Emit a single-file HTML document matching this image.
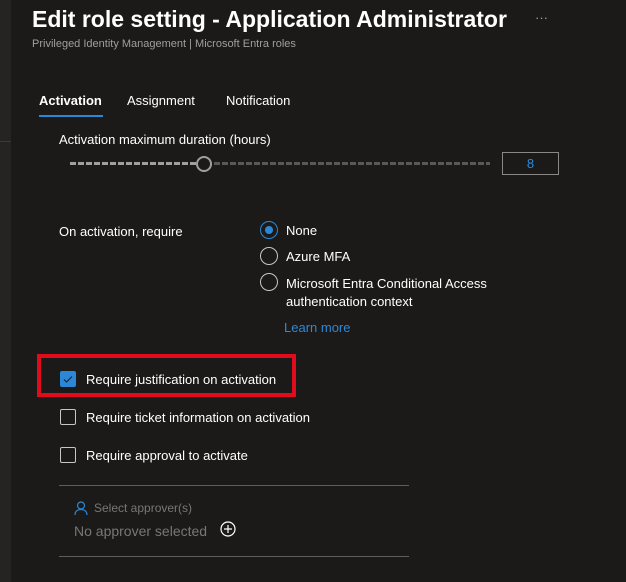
<!DOCTYPE html>
<html><head><style>
body{margin:0;width:626px;height:582px;background:#1b1a19;font-family:"Liberation Sans",sans-serif;color:#fff;position:relative;overflow:hidden}
.a{position:absolute;white-space:nowrap}
.strip{position:absolute;left:0;top:0;width:11px;height:582px;background:#252423}
.cb{position:absolute;width:16px;height:16px;border:1px solid #c8c6c4;border-radius:2px;box-sizing:border-box}
.rd{position:absolute;width:18px;height:18px;border:1.5px solid #c8c6c4;border-radius:50%;box-sizing:border-box}
.t{font-size:13px}
</style></head><body>
<div class="strip"></div>
<div style="position:absolute;left:0;top:141px;width:11px;height:1px;background:#3b3a39"></div>
<div class="a" style="left:32px;top:6px;font-size:23px;font-weight:bold">Edit role setting - Application Administrator</div>
<div class="a" style="left:535px;top:10px;font-size:13px;color:#a19f9d">···</div>
<div class="a" style="left:32px;top:38px;font-size:11px;color:#a19f9d">Privileged Identity Management | Microsoft Entra roles</div>
<div class="a" style="left:39px;top:93px;font-size:13px;font-weight:bold">Activation</div>
<div style="position:absolute;left:39px;top:115px;width:64px;height:2px;background:#2b88d8"></div>
<div class="a" style="left:127px;top:93px;font-size:13px">Assignment</div>
<div class="a" style="left:226px;top:93px;font-size:13px">Notification</div>
<div class="a t" style="left:59px;top:132px">Activation maximum duration (hours)</div>
<div style="position:absolute;left:70px;top:162px;width:420px;height:3px;background:repeating-linear-gradient(90deg,#5a5958 0 6px,transparent 6px 8px)"></div>
<div style="position:absolute;left:70px;top:162px;width:134px;height:3px;background:repeating-linear-gradient(90deg,#a19f9d 0 6px,transparent 6px 8px)"></div>
<div style="position:absolute;left:196px;top:156px;width:16px;height:16px;border:2px solid #a19f9d;border-radius:50%;background:#1b1a19;box-sizing:border-box"></div>
<div style="position:absolute;left:502px;top:152px;width:57px;height:23px;border:1px solid #8a8886;box-sizing:border-box;color:#2b88d8;font-size:13px;text-align:center;line-height:21px">8</div>
<div class="a t" style="left:59px;top:224px">On activation, require</div>
<div class="rd" style="left:260px;top:221px;border-color:#2b88d8"><div style="position:absolute;left:3.5px;top:3.5px;width:8px;height:8px;border-radius:50%;background:#2b88d8"></div></div>
<div class="a t" style="left:286px;top:223px">None</div>
<div class="rd" style="left:260px;top:247px"></div>
<div class="a t" style="left:286px;top:249px">Azure MFA</div>
<div class="rd" style="left:260px;top:273px"></div>
<div class="a t" style="left:286px;top:275px;line-height:18px">Microsoft Entra Conditional Access<br>authentication context</div>
<div class="a t" style="left:284px;top:320px;color:#2b88d8">Learn more</div>
<div style="position:absolute;left:37px;top:354px;width:259px;height:43px;border:4px solid #e00b1c;box-sizing:border-box"></div>
<div class="cb" style="left:60px;top:371px;background:#2b88d8;border-color:#2b88d8"><svg width="16" height="16" style="position:absolute;left:-1px;top:-1px"><path d="M4 8.5l2.5 2.5 5.5-5.5" stroke="#1b1a19" stroke-width="1" fill="none"/></svg></div>
<div class="a t" style="left:86px;top:372px">Require justification on activation</div>
<div class="cb" style="left:60px;top:409px"></div>
<div class="a t" style="left:86px;top:410px">Require ticket information on activation</div>
<div class="cb" style="left:60px;top:447px"></div>
<div class="a t" style="left:86px;top:448px">Require approval to activate</div>
<div style="position:absolute;left:59px;top:485px;width:350px;height:1px;background:#605e5c"></div>
<svg class="a" style="left:74px;top:501px" width="14" height="14"><circle cx="7" cy="4.5" r="3.5" stroke="#2b88d8" fill="none" stroke-width="1.2"/><path d="M1 14c0-4 3-5.5 6-5.5s6 1.5 6 5.5" stroke="#2b88d8" fill="none" stroke-width="1.2"/></svg>
<div class="a" style="left:94px;top:501px;font-size:12px;color:#797775">Select approver(s)</div>
<div class="a" style="left:74px;top:523px;font-size:14px;color:#797775">No approver selected</div>
<svg class="a" style="left:220px;top:521px" width="16" height="16"><circle cx="8" cy="8" r="7" stroke="#fff" fill="none" stroke-width="1.2"/><path d="M8 4v8M4 8h8" stroke="#fff" stroke-width="1.2"/></svg>
<div style="position:absolute;left:59px;top:556px;width:350px;height:1px;background:#605e5c"></div>
</body></html>
